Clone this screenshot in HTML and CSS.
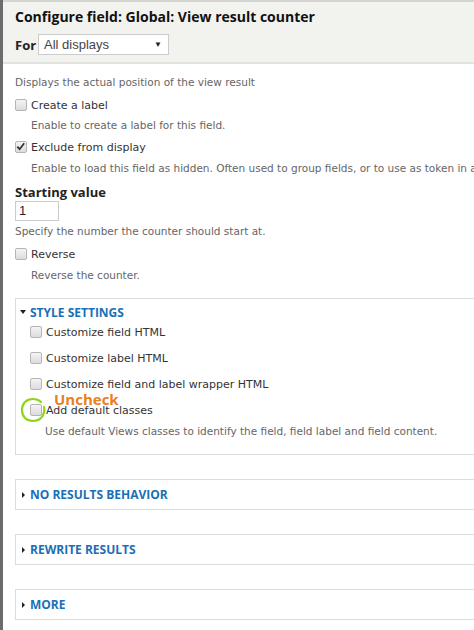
FILE: index.html
```html
<!DOCTYPE html>
<html>
<head>
<meta charset="utf-8">
<link rel="stylesheet" href="styles.css">
</head>
<body>
<div class="frame">
  <div class="header">
    <h1 class="title">Configure field: Global: View result counter</h1>
    <div class="for-row">
      <span class="for-label">For</span>
      <span class="select">All displays<span class="arrow">▼</span></span>
    </div>
  </div>
  <div class="content">
    <p class="desc top-desc">Displays the actual position of the view result</p>

    <div class="check-row r-create"><span class="cb"></span><span class="lbl">Create a label</span></div>
    <p class="desc indent">Enable to create a label for this field.</p>

    <div class="check-row r-next"><span class="cb checked"><svg viewBox="0 0 11 11" width="11" height="11"><path d="M2.3 5.6 L4.6 8.2 L9.2 2.2" fill="none" stroke="#333" stroke-width="1.8"/></svg></span><span class="lbl">Exclude from display</span></div>
    <p class="desc indent d-load nowrap">Enable to load this field as hidden. Often used to group fields, or to use as token in another field.</p>

    <div class="field-label">Starting value</div>
    <div class="text-input">1</div>
    <p class="desc d-specify">Specify the number the counter should start at.</p>

    <div class="check-row r-reverse"><span class="cb"></span><span class="lbl">Reverse</span></div>
    <p class="desc indent d-counter">Reverse the counter.</p>

    <div class="fieldset open">
      <div class="legend"><span class="tri down"></span>STYLE SETTINGS</div>
      <div class="fs-body">
        <div class="check-row"><span class="cb"></span><span class="lbl">Customize field HTML</span></div>
        <div class="check-row"><span class="cb"></span><span class="lbl">Customize label HTML</span></div>
        <div class="check-row"><span class="cb"></span><span class="lbl">Customize field and label wrapper HTML</span></div>
        <div class="check-row annotated"><span class="cb"></span><span class="lbl">Add default classes</span>
          <span class="note">Uncheck</span>
          <svg class="circle" viewBox="0 0 26 26" width="26" height="26"><path d="M21 5 C17 1 9 1 5 5 C1 9 1 17 5 21 C9 25 17 25 21 21 C24 18 25 13 24 10" fill="none" stroke="#8fd41c" stroke-width="2.2" stroke-linecap="round"/></svg>
        </div>
        <p class="desc indent2">Use default Views classes to identify the field, field label and field content.</p>
      </div>
    </div>

    <div class="fieldset closed"><div class="legend"><span class="tri right"></span>NO RESULTS BEHAVIOR</div></div>
    <div class="fieldset closed"><div class="legend"><span class="tri right"></span>REWRITE RESULTS</div></div>
    <div class="fieldset closed"><div class="legend"><span class="tri right"></span>MORE</div></div>
  </div>
</div>
</body>
</html>
```
FILE: styles.css
```css
html, body {
  margin: 0;
  padding: 0;
  background: #fff;
  overflow: hidden;
}
body {
  width: 474px;
  height: 630px;
  font-family: "DejaVu Sans", sans-serif;
  color: #333;
}
.frame {
  border-left: 3px solid #6b6b6b;
  min-height: 630px;
  box-sizing: border-box;
}
.header {
  background: #f2f2ee;
  border-top: 2px solid #d4d4d0;
  border-bottom: 2px solid #e2e2de;
  height: 60px;
  padding: 0 0 0 12px;
}
.title {
  margin: 0;
  padding-top: 6px;
  font-family: "Open Sans", sans-serif;
  font-weight: bold;
  font-size: 14px;
  line-height: 18px;
  color: #111;
}
.for-row {
  display: flex;
  align-items: center;
  margin-top: 8px;
}
.for-label {
  font-family: "Open Sans", sans-serif;
  font-weight: bold;
  font-size: 13px;
  color: #222;
  width: 23px;
}
.select {
  position: relative;
  box-sizing: border-box;
  width: 131px;
  height: 21px;
  border: 1px solid #ccc;
  background: #fff;
  font-family: "Liberation Sans", sans-serif;
  font-size: 13px;
  line-height: 19px;
  padding-left: 5px;
  color: #444;
}
.arrow {
  position: absolute;
  right: 6px;
  top: 0;
  font-size: 8px;
  color: #222;
}
.content {
  padding-left: 12px;
}
.desc {
  margin: 0;
  font-size: 10.5px;
  line-height: 13px;
  color: #666;
}
.top-desc { margin-top: 12px; }
.r-create { margin-top: 9px; }
.r-next { margin-top: 8px; }
.r-reverse { margin-top: 9px; }
.indent { margin-left: 16px; margin-top: 7px; }
.d-load { margin-top: 8px; }
.d-counter { margin-top: 8px; }
.indent2 { margin-left: 15px; }
.nowrap { white-space: nowrap; }
.check-row {
  position: relative;
  display: flex;
  align-items: center;
  height: 14px;
}
.cb {
  box-sizing: border-box;
  width: 12px;
  height: 12px;
  border: 1px solid #b5b5b5;
  border-radius: 2px;
  background: linear-gradient(#f4f4f4, #dcdcdc);
  margin-right: 4px;
  display: flex;
}
.cb svg { display: block; margin: -1px; }
.lbl {
  font-size: 11px;
  color: #333;
}
.field-label {
  margin-top: 9px;
  font-family: "Open Sans", sans-serif;
  font-weight: bold;
  font-size: 13px;
  line-height: 16px;
  color: #222;
}
.text-input {
  box-sizing: border-box;
  width: 44px;
  height: 20px;
  border: 1px solid #ccc;
  font-family: "Liberation Sans", sans-serif;
  font-size: 13px;
  line-height: 18px;
  padding-left: 3px;
  margin-top: 1px;
  color: #222;
}
.d-specify { margin-top: 4px; }
.fieldset {
  border: 1px solid #dcdcdc;
  border-right: none;
  margin-right: -10px;
  box-sizing: border-box;
}
.fieldset.open { margin-top: 16px; height: 157px; }
.fieldset.closed { height: 31px; margin-top: 24px; }
.legend {
  display: flex;
  align-items: center;
  font-family: "Open Sans", sans-serif;
  font-weight: bold;
  font-size: 12px;
  color: #1a6fb5;
  padding-left: 4px;
  height: 29px;
}
.fieldset.open .legend { height: 26px; }
.tri {
  display: inline-block;
  width: 0;
  height: 0;
  margin-right: 4px;
}
.tri.down {
  border-left: 3px solid transparent;
  border-right: 3px solid transparent;
  border-top: 4px solid #222;
}
.tri.right {
  border-top: 3px solid transparent;
  border-bottom: 3px solid transparent;
  border-left: 3px solid #222;
  margin-left: 2px;
  margin-right: 5px;
}
.fs-body {
  padding-left: 14px;
  display: flex;
  flex-direction: column;
  gap: 12px;
}
.fs-body .desc.indent2 { margin-top: -4px; }
.note {
  position: absolute;
  left: 24px;
  top: -11px;
  font-family: "Open Sans", sans-serif;
  font-weight: bold;
  font-size: 15px;
  line-height: 14px;
  color: #e8801c;
}
.circle {
  position: absolute;
  left: -10px;
  top: -6px;
}
```
